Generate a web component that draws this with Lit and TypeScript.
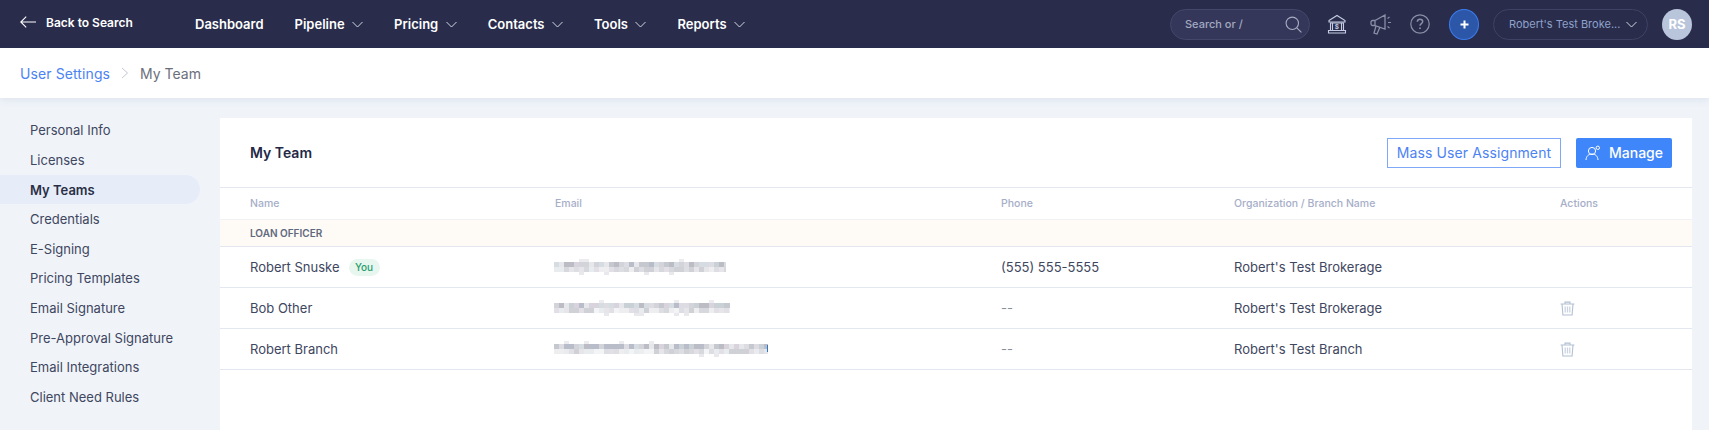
import { LitElement, html, css, svg } from "lit";
import { customElement } from "lit/decorators.js";

const sideItems = [
  "Personal Info",
  "Licenses",
  "My Teams",
  "Credentials",
  "E-Signing",
  "Pricing Templates",
  "Email Signature",
  "Pre-Approval Signature",
  "Email Integrations",
  "Client Need Rules",
];

const navItems = [
  { label: "Dashboard", menu: false },
  { label: "Pipeline", menu: true },
  { label: "Pricing", menu: true },
  { label: "Contacts", menu: true },
  { label: "Tools", menu: true },
  { label: "Reports", menu: true },
];

const members = [
  { name: "Robert Snuske", you: true, phone: "(555) 555-5555", org: "Robert's Test Brokerage", del: false, w: 172, seed: 7, tail: "" },
  { name: "Bob Other", you: false, phone: "--", org: "Robert's Test Brokerage", del: true, w: 176, seed: 23, tail: "" },
  { name: "Robert Branch", you: false, phone: "--", org: "Robert's Test Branch", del: true, w: 214, seed: 51, tail: "#2a78c8" },
];

// the addresses are pixelated in the source, so draw a mosaic instead of text
const upper = ["#dcdce2", "#d2d4da", "#c6c8d0", "#e6e7eb", "#d6dde2", "#bcbdc4", "#d9d3dd", "#c9d0d6", "#b9bcc9"];
const lower = ["#e6e6ea", "#dddee3", "#eeeef1", "#d6d8de", "#e8ecef", "#f3f4f6", "#cfd1d7", "#e2dfe6"];

function mosaic(width: number, seed: number, tail: string) {
  let s = seed;
  const next = () => {
    s = (s * 9301 + 49297) % 233280;
    return s / 233280;
  };
  const cells = [];
  for (let x = 0; x < width; x += 5) {
    cells.push(svg`<rect x=${x} y="3" width="5" height="5" fill=${upper[Math.floor(next() * upper.length)]}></rect>`);
    cells.push(svg`<rect x=${x} y="8" width="5" height="5" fill=${lower[Math.floor(next() * lower.length)]}></rect>`);
    if (next() > 0.88) cells.push(svg`<rect x=${x} y="0" width="5" height="3" fill="#ececf0"></rect>`);
    if (next() > 0.88) cells.push(svg`<rect x=${x} y="13" width="5" height="3" fill="#e8e8ed"></rect>`);
  }
  if (tail) cells.push(svg`<rect x=${width - 1} y="4" width="1" height="7" fill=${tail}></rect>`);
  return html`<svg class="mosaic" width=${width} height="16" shape-rendering="crispEdges">${cells}</svg>`;
}

const chevron = html`<svg class="chev" width="11" height="7" viewBox="0 0 11 7" fill="none" stroke="#d3d6e2" stroke-width="1"><path d="M.5 1 5.500 6l5-5"/></svg>`;

const trash = html`<svg width="15" height="15" viewBox="0 0 15 15" fill="none" stroke="#b3bfd3" stroke-width="1.1">
  <path d="M.6 3h13.8M5 3V1.1h5V3M2 3l.9 11h9.2L13 3"/>
  <path d="M5.2 5.500v6M7.500 5.500v6M9.800 5.500v6" stroke-width="1.300" stroke="#ccd4e1"/>
</svg>`;

@customElement("app-root")
export class AppRoot extends LitElement {
  static styles = css`
    :host {
      display: block;
      height: 100vh;
      overflow: hidden;
      background: #f0f4f9;
      font-family: Inter, "Noto Sans", sans-serif;
      color: #3e4660;
    }

    .topbar {
      display: flex;
      align-items: center;
      height: 48px;
      padding: 0 17px 0 20px;
      background: #292c4b;
      color: #fff;
    }
    .back {
      display: flex;
      align-items: center;
      gap: 10px;
      width: 175px;
      font-size: 12px;
      font-weight: 600;
      margin-top: -4px;
    }
    .nav {
      display: flex;
      align-items: center;
      gap: 31px;
      font-size: 13px;
      font-weight: 600;
    }
    .nav-item {
      display: flex;
      align-items: center;
      gap: 7.5px;
    }
    .tools {
      display: flex;
      align-items: center;
      margin-left: auto;
    }
    .search {
      display: flex;
      align-items: center;
      justify-content: space-between;
      box-sizing: border-box;
      width: 140px;
      height: 31px;
      padding: 0 7px 0 14px;
      border: 1px solid #44476a;
      border-radius: 16px;
      background: #34375a;
      color: #a3a9c0;
      font-size: 11px;
      font-weight: 500;
    }
    .icon-bank { margin-left: 17px; }
    .icon-horn { margin-left: 23px; }
    .icon-help { margin-left: 18px; }
    .plus {
      display: flex;
      align-items: center;
      justify-content: center;
      box-sizing: border-box;
      width: 30px;
      height: 31px;
      margin-left: 19px;
      border: 1px solid #3b7df0;
      border-radius: 50%;
      background: #2c57a8;
    }
    .org {
      display: flex;
      align-items: center;
      justify-content: space-between;
      box-sizing: border-box;
      width: 155px;
      height: 31px;
      margin-left: 14px;
      padding: 0 10px 0 15px;
      border: 1px solid #3f4263;
      border-radius: 16px;
      color: #8da2cc;
      font-size: 11px;
      font-weight: 400;
      white-space: nowrap;
    }
    .avatar {
      display: flex;
      align-items: center;
      justify-content: center;
      width: 30px;
      height: 31px;
      margin-left: 14px;
      border-radius: 50%;
      background: #b9c5da;
      color: #fff;
      font-size: 13px;
      font-weight: 700;
    }

    .crumbs {
      position: relative;
      display: flex;
      align-items: center;
      gap: 11px;
      height: 50px;
      padding-left: 20px;
      background: #fff;
      box-shadow: 0 2px 8px rgba(60, 90, 150, 0.1);
      font-size: 14px;
    }
    .crumbs a { color: #4b83f3; letter-spacing: 0.1px; }
    .crumbs span { color: #6b6f7c; }

    .body {
      display: flex;
      padding: 20px 17px 0 0;
    }
    .side {
      flex: 0 0 220px;
      margin-top: -2.4px;
      font-size: 13px;
    }
    .side-item {
      display: flex;
      align-items: center;
      width: 200px;
      height: 29.6px;
      box-sizing: border-box;
      padding-left: 30px;
      border-radius: 0 15px 15px 0;
    }
    .side-item.on {
      background: #e6edf8;
      color: #2a2f45;
      font-weight: 600;
    }

    .card {
      flex: 1;
      height: 312px;
      background: #fff;
    }
    .card-head {
      display: flex;
      align-items: center;
      justify-content: space-between;
      box-sizing: border-box;
      height: 70px;
      padding: 0 20px 0 30px;
      border-bottom: 1px solid #e3e7ef;
    }
    .card-head h2 {
      margin: 0;
      font-size: 14px;
      font-weight: 600;
      color: #232845;
    }
    .actions {
      display: flex;
      gap: 15px;
    }
    .btn {
      display: flex;
      align-items: center;
      justify-content: center;
      box-sizing: border-box;
      height: 30px;
      font-size: 14px;
      font-weight: 500;
    }
    .btn.ghost {
      width: 174px;
      border: 1px solid #7fa8f8;
      color: #4b83f3;
      font-weight: 400;
      letter-spacing: 0.1px;
    }
    .btn.solid {
      gap: 8px;
      width: 96px;
      border-radius: 2px;
      background: #3f86fb;
      color: #fff;
    }

    .row {
      display: grid;
      grid-template-columns: 305px 446px 233px 326px 1fr;
      align-items: center;
      box-sizing: border-box;
      padding-left: 30px;
      border-bottom: 1px solid #e3e7ef;
    }
    .row.labels {
      height: 32px;
      border-bottom-color: #f0f2f6;
      color: #a6aec8;
      font-size: 10.5px;
      font-weight: 500;
    }
    .row.group {
      display: flex;
      height: 27px;
      background: #fefaf5;
      color: #5e6980;
      font-size: 10px;
      font-weight: 600;
    }
    .row.person {
      height: 41px;
      font-size: 13px;
    }
    .who {
      display: flex;
      align-items: center;
      gap: 9px;
    }
    .you {
      display: flex;
      align-items: center;
      justify-content: center;
      width: 31px;
      height: 17px;
      border-radius: 9px;
      background: #e8f6f0;
      color: #1f9d6b;
      font-size: 10px;
      font-weight: 500;
    }
    .mosaic { display: block; margin-left: -1px; }
    .del { display: block; margin-top: 3px; }
    .muted { color: #8a8f9c; }
  `;

  render() {
    return html`
      <div class="topbar">
        <div class="back">
          <svg width="16" height="12" viewBox="0 0 16 12" fill="none" stroke="#fff" stroke-width="1.1"><path d="M16 6H1M6.200.6.800 6l5.400 5.400"/></svg>
          Back to Search
        </div>
        <div class="nav">
          ${navItems.map(
            (n) => html`<div class="nav-item">${n.label}${n.menu ? chevron : ""}</div>`
          )}
        </div>
        <div class="tools">
          <div class="search">
            Search or /
            <svg width="17" height="17" viewBox="0 0 17 17" fill="none" stroke="#a8adc2" stroke-width="1.1"><circle cx="7.300" cy="7.300" r="6.200"/><path d="m11.800 11.800 4.600 4.600"/></svg>
          </div>
          <svg class="icon-bank" width="20" height="20" viewBox="0 0 20 20" fill="none" stroke="#c5cee2" stroke-width="1.1">
            <path d="M2 6.500 10 1.500l8 5v1.500H2z"/>
            <path d="M3.500 9h13v7.500h-13zM5.500 9v7.500M14.500 9v7.500"/>
            <path d="M1.500 16.500h17v2.500h-17z"/>
            <text x="10" y="15" text-anchor="middle" font-size="6.500" font-weight="700" fill="#c5cee2" stroke="none" font-family="Inter">$</text>
          </svg>
          <svg class="icon-horn" width="22" height="21" viewBox="0 0 22 21" fill="none" stroke="#8a8fa6" stroke-width="1.300">
            <path d="M5 6.500 15 1v14L5 11.500zM5 6.500H2.500a1.500 1.500 0 0 0-1.500 1.500v2a1.500 1.500 0 0 0 1.500 1.500H5z"/>
            <path d="M6 12 4 19l3 1 3-7"/>
            <path d="M17.500 4.500l2-1.500M18 8.500h3M17.500 12.500l2 1.500" stroke-width="1.100"/>
          </svg>
          <svg class="icon-help" width="20" height="20" viewBox="0 0 20 20" fill="none" stroke="#8a8fa6" stroke-width="1.200">
            <circle cx="10" cy="10" r="9.200"/>
            <path d="M7.300 7.800A2.700 2.700 0 0 1 10 5.300c1.600 0 2.700 1 2.700 2.300 0 2-2.700 2-2.700 4.200" stroke-width="1.500"/>
            <path d="M10 13.500v1.500" stroke-width="1.700"/>
          </svg>
          <div class="plus">
            <svg width="9" height="9" viewBox="0 0 9 9" stroke="#fff" stroke-width="2"><path d="M4.500.5v8M.5 4.500h8"/></svg>
          </div>
          <div class="org">Robert's Test Broke...${chevron}</div>
          <div class="avatar">RS</div>
        </div>
      </div>

      <div class="crumbs">
        <a>User Settings</a>
        <svg width="8" height="12" viewBox="0 0 8 12" fill="none" stroke="#c4c8d2" stroke-width="1"><path d="m1 1 5.500 5L1 11"/></svg>
        <span>My Team</span>
      </div>

      <div class="body">
        <div class="side">
          ${sideItems.map(
            (s) => html`<div class="side-item ${s === "My Teams" ? "on" : ""}">${s}</div>`
          )}
        </div>
        <div class="card">
          <div class="card-head">
            <h2>My Team</h2>
            <div class="actions">
              <div class="btn ghost">Mass User Assignment</div>
              <div class="btn solid">
                <svg width="16" height="16" viewBox="0 0 16 16" fill="none" stroke="#fff" stroke-width="1"><circle cx="7" cy="6" r="3.600"/><path d="M1 15c.2-3.800 2.600-6 6-6s5.800 2.200 6 6"/><circle cx="12.800" cy="2.800" r="1.700" fill="#3f86fb"/></svg>
                Manage
              </div>
            </div>
          </div>
          <div class="row labels">
            <div>Name</div><div>Email</div><div>Phone</div><div>Organization / Branch Name</div><div>Actions</div>
          </div>
          <div class="row group">LOAN OFFICER</div>
          ${members.map(
            (m) => html`<div class="row person">
              <div class="who">${m.name}${m.you ? html`<span class="you">You</span>` : ""}</div>
              <div>${mosaic(m.w, m.seed, m.tail)}</div>
              <div class=${m.phone === "--" ? "muted" : ""}>${m.phone}</div>
              <div>${m.org}</div>
              <div>${m.del ? html`<span class="del">${trash}</span>` : ""}</div>
            </div>`
          )}
        </div>
      </div>
    `;
  }
}
